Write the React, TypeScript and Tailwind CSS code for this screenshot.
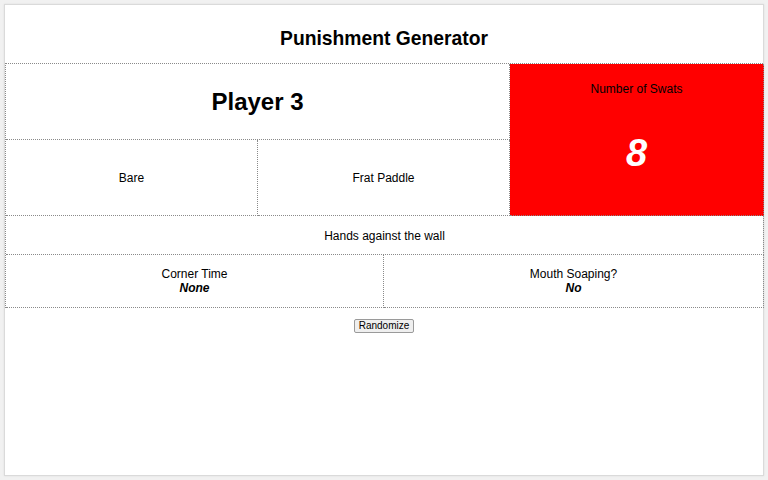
import React, { useState } from 'react';

const IMPLEMENTS = ['Frat Paddle', 'Hairbrush', 'Belt', 'Wooden Spoon', 'Hand'];
const STATES = ['Bare', 'Clothed', 'Underwear'];
const POSITIONS = ['Hands against the wall', 'Over the knee', 'Bent over', 'Touching toes'];
const CORNER = ['None', '5 minutes', '10 minutes', '15 minutes'];

const pick = <T,>(list: T[]) => list[Math.floor(Math.random() * list.length)];

const cell = 'border-r border-b border-dotted border-[#8a8a8a] flex items-center justify-center text-center';

export default function App() {
  const [player, setPlayer] = useState(3);
  const [swats, setSwats] = useState(8);
  const [state, setState] = useState('Bare');
  const [implement, setImplement] = useState('Frat Paddle');
  const [position, setPosition] = useState('Hands against the wall');
  const [corner, setCorner] = useState('None');
  const [soap, setSoap] = useState('No');

  const randomize = () => {
    setPlayer(1 + Math.floor(Math.random() * 6));
    setSwats(1 + Math.floor(Math.random() * 20));
    setState(pick(STATES));
    setImplement(pick(IMPLEMENTS));
    setPosition(pick(POSITIONS));
    setCorner(pick(CORNER));
    setSoap(pick(['Yes', 'No']));
  };

  return (
    <div className="min-h-screen bg-[#f1f1f1] p-[4px] font-['Liberation_Sans',Arial,sans-serif] text-black">
      <div className="h-[472px] bg-white border border-[#dadada] shadow-[0_0_2px_rgba(0,0,0,0.08)]">
        <h1 className="pt-[23px] pb-[13px] text-center text-[19.3px] leading-[22px] font-bold">
          Punishment Generator
        </h1>

        <div className="grid grid-cols-[252px_126px_126px_254px] grid-rows-[76px_76px_39px_53px] border-l border-t border-dotted border-[#8a8a8a] text-[12px] leading-[14px]">
          <div className={`${cell} col-span-3 text-[24px] leading-[28px] font-bold`}>
            Player {player}
          </div>
          <div className="row-span-2 border-r border-b border-dotted border-[#8a8a8a] bg-[#ff0000] flex flex-col items-center pt-[18px]">
            <span>Number of Swats</span>
            <span className="mt-[35px] text-[38px] leading-[44px] font-bold italic text-white">{swats}</span>
          </div>

          <div className={cell}>{state}</div>
          <div className={`${cell} col-span-2`}>{implement}</div>

          <div className={`${cell} col-span-4 pt-[1px]`}>{position}</div>

          <div className={`${cell} col-span-2 flex-col`}>
            <span>Corner Time</span>
            <span className="font-bold italic">{corner}</span>
          </div>
          <div className={`${cell} col-span-2 flex-col`}>
            <span>Mouth Soaping?</span>
            <span className="font-bold italic">{soap}</span>
          </div>
        </div>

        <div className="mt-[11px] flex justify-center">
          <button
            onClick={randomize}
            className="px-[4px] text-[10px] leading-[12px] bg-[#efefef] border border-[#9a9a9a] rounded-[2px] hover:bg-[#e5e5e5]"
          >
            Randomize
          </button>
        </div>
      </div>
    </div>
  );
}
